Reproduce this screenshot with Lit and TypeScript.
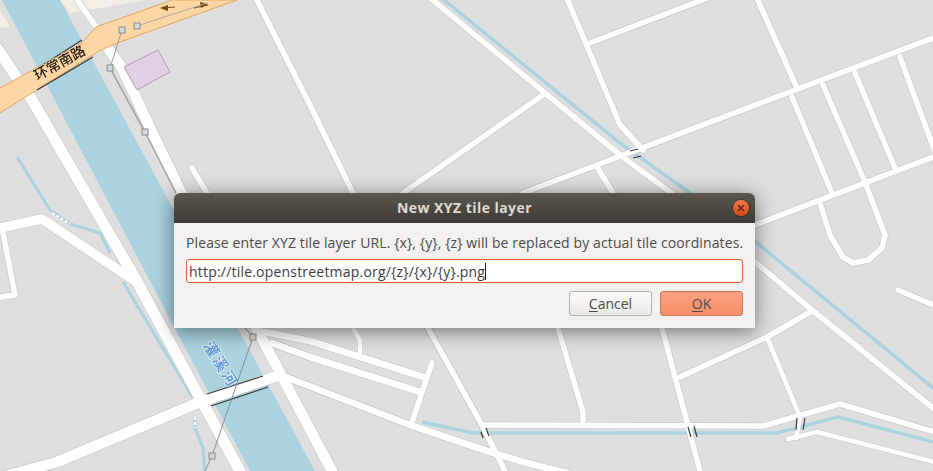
import { LitElement, html, svg, css } from 'lit';
import { customElement } from 'lit/decorators.js';

type Line = { d: string; w: number };

// white streets, in map pixels
const ROADS: Line[] = [
  { d: '-5,45 32,100 110,235 135,278 200,398 240,471', w: 10.5 },
  { d: '77,0 97,28', w: 5 },
  { d: '107,47 122,68 152,132 180,190 260,335 332,471', w: 10 },
  { d: '192,168 207,193', w: 5 },
  { d: '-5,229 42,219 135,281', w: 9 },
  { d: '3,232 15,295 -5,298', w: 5 },
  { d: '5,476 57,462 200,402 277,376', w: 10 },
  { d: '265,332 310,341 423,377', w: 6 },
  { d: '272,343 310,357 420,392', w: 6 },
  { d: '278,374 410,425 490,452 527,463 575,475', w: 6 },
  { d: '432,363 412,422', w: 5 },
  { d: '353,328 360,340 360,353', w: 4 },
  { d: '257,0 310,105 353,193 428,328 483,427 507,475', w: 5 },
  { d: '483,425 763,426 840,404 938,433', w: 5 },
  { d: '788,439 817,432 938,463', w: 4 },
  { d: '558,328 583,412 583,425', w: 5 },
  { d: '662,328 701,475', w: 5 },
  { d: '680,377 767,337 812,311', w: 5 },
  { d: '767,337 800,417 796,438', w: 4 },
  { d: '428,-4 620,155 670,192 755,262 812,310 938,412', w: 5 },
  { d: '566,-4 620,125 643,150', w: 5 },
  { d: '543,95 403,193', w: 5 },
  { d: '590,43 710,-3', w: 5 },
  { d: '523,193 938,36', w: 5 },
  { d: '597,167 613,193', w: 5 },
  { d: '756,-4 797,88', w: 5 },
  { d: '792,97 832,193', w: 5 },
  { d: '823,85 865,182 885,235', w: 5 },
  { d: '855,73 895,168', w: 5 },
  { d: '900,57 938,160', w: 5 },
  { d: '755,225 938,155', w: 5 },
  { d: '820,203 830,235 843,257 853,263 868,260 882,248 885,235', w: 5 },
  { d: '898,290 938,307', w: 5 },
];

// thin waterways
const STREAMS: Line[] = [
  { d: '439,-4 620,143 690,193 757,243 938,392', w: 3.5 },
  { d: '422,422 473,433 777,433 838,417 938,443', w: 3.5 },
  { d: '17,157 50,210 70,224 100,233 110,253', w: 3 },
  { d: '123,282 193,398', w: 3 },
  { d: '195,417 195,428 203,448 205,475', w: 3 },
];

// dark bridge edges
const BRIDGES = [
  '207,394 263,376', '211,406 268,387',
  '35,70 82,40', '37,90 93,57',
  '630,151 638,149', '633,158 641,156',
  '481,432 483,438', '486,428 489,436',
  '688,427 691,437', '694,426 697,437',
  '797,418 796,430', '805,418 803,430',
];

const HANDLES = [[122, 30], [137, 26], [110, 68], [145, 132], [253, 337], [212, 456]];

@customElement('map-canvas')
export class MapCanvas extends LitElement {
  static styles = css`
    :host {
      display: block;
      width: 933px;
      height: 471px;
    }

    svg {
      display: block;
    }

    .road-label {
      font: 500 14px "Noto Sans CJK SC", sans-serif;
      fill: #1f1a10;
      stroke: #fcd6a4;
      stroke-width: 1.5px;
      paint-order: stroke;
    }

    .water-label {
      font: 500 15px "Noto Sans CJK SC", sans-serif;
      letter-spacing: 2px;
      fill: #5f95d5;
      stroke: #d5e8f0;
      stroke-width: 2px;
      paint-order: stroke;
    }
  `;

  render() {
    return html`
      <svg width="933" height="471" viewBox="0 0 933 471">
        <defs>
          <filter id="soft" x="0" y="0" width="100%" height="100%">
            <feGaussianBlur stdDeviation="0.45"></feGaussianBlur>
          </filter>
        </defs>
        <g filter="url(#soft)">
          <rect width="933" height="471" fill="#dfdfdf"></rect>
          <polygon points="60,0 70,13 147,0" fill="#f2efe9"></polygon>
          <polygon points="0,10 10,27 0,28" fill="#f2efe9"></polygon>
          <polygon points="2,0 60,0 315,471 250,471" fill="#aad3df"></polygon>
          ${STREAMS.map((s) => svg`<polyline points=${s.d} fill="none" stroke="#aad3df" stroke-width=${s.w}></polyline>`)}
          ${ROADS.map((r) => svg`<polyline points=${r.d} fill="none" stroke="#c6c6c6" stroke-width=${r.w + 1.8} stroke-linecap="round" stroke-linejoin="round"></polyline>`)}
          ${ROADS.map((r) => svg`<polyline points=${r.d} fill="none" stroke="#fff" stroke-width=${r.w + 0.6} stroke-linecap="round" stroke-linejoin="round"></polyline>`)}
          <polyline points="52,213 70,224" fill="none" stroke="#fff" stroke-width="2" stroke-dasharray="3 2"></polyline>
          <polyline points="195,417 195,428" fill="none" stroke="#fff" stroke-width="2" stroke-dasharray="3 2"></polyline>
          <polygon points="124,67 158,50 170,72 137,90" fill="#e3cfe3" stroke="#b09cb0"></polygon>
          <polygon points="-2,89 82,43 96,27 172,0 237,0 120,42 101,50 -2,114" fill="#fcd6a4" stroke="#e3a657"></polygon>
          ${BRIDGES.map((b) => svg`<polyline points=${b} fill="none" stroke="#3a3a3a" stroke-width="1.2"></polyline>`)}
          <path d="M175 7 L162 8 M208 5 L194 8" stroke="#734a08" stroke-width="1.2" fill="none"></path>
          <path d="M160 8 L168 5 L168 11 Z M208 4 L200 2 L201 8 Z" fill="#734a08"></path>
          <text class="road-label" transform="translate(59 62) rotate(-29)" text-anchor="middle" dominant-baseline="central">环常南路</text>
          <text class="water-label" transform="translate(222 364) rotate(58)" text-anchor="middle" dominant-baseline="central">灌溪河</text>
          <g fill="none">
            <polyline points="137,26 207,3" stroke="#a9a9a9"></polyline>
            <polyline points="122,30 110,68" stroke="#999"></polyline>
            <polyline points="110,68 145,132 176,193" stroke="#a4a4a4" stroke-width="1.6"></polyline>
            <polyline points="245,328 253,337 212,456 205,471" stroke="#8d8d8d"></polyline>
          </g>
        </g>
        ${HANDLES.map(([x, y]) => svg`
          <rect x=${x - 3} y=${y - 3} width="6" height="6" fill="#d3d9e0" stroke="#8a8a8a"></rect>
        `)}
      </svg>
    `;
  }
}

@customElement('tile-dialog')
export class TileDialog extends LitElement {
  static styles = css`
    :host {
      display: flex;
      flex-direction: column;
      width: 581px;
      height: 135px;
      background: #f2f1ef;
      border-radius: 6px 6px 0 0;
      box-shadow: 0 3px 20px rgba(0, 0, 0, 0.5);
      font-family: "Open Sans", "Noto Sans", sans-serif;
      font-size: 14px;
      color: #4c4c4c;
    }

    .titlebar {
      position: relative;
      flex: none;
      height: 29px;
      padding-bottom: 1px;
      display: flex;
      align-items: center;
      justify-content: center;
      background: linear-gradient(#5a574e, #3d3b35);
      border-radius: 6px 6px 0 0;
      color: #dfdbd2;
      font-weight: 700;
      letter-spacing: 0.45px;
    }

    .close {
      position: absolute;
      right: 6px;
      top: 7px;
      width: 16px;
      height: 16px;
      border-radius: 50%;
      background: linear-gradient(#f27a45, #d9481a);
      box-shadow: 0 0 0 1px rgba(40, 30, 20, 0.5);
    }

    .close svg {
      display: block;
    }

    .body {
      flex: 1;
      display: flex;
      flex-direction: column;
      padding: 10px 12px 12px;
    }

    .prompt {
      height: 26px;
      line-height: 20px;
      white-space: nowrap;
      letter-spacing: 0.11px;
    }

    .field {
      height: 24px;
      box-sizing: border-box;
      display: flex;
      align-items: center;
      padding: 0 2px;
      border: 1px solid #e0602c;
      border-radius: 3px;
      background: #fff;
      box-shadow: inset 0 0 0 1px rgba(240, 120, 70, 0.12);
      color: #3c3c3c;
      white-space: nowrap;
      letter-spacing: 0.2px;
    }

    .caret {
      width: 1px;
      height: 17px;
      background: #222;
    }

    .actions {
      display: flex;
      justify-content: flex-end;
      gap: 8px;
      margin-top: 8px;
    }

    .btn {
      width: 83px;
      height: 25px;
      box-sizing: border-box;
      display: flex;
      align-items: center;
      justify-content: center;
      border: 1px solid #b6b2ab;
      border-radius: 3px;
      background: linear-gradient(#fcfcfb, #e9e8e6);
    }

    .btn.ok {
      border-color: #c4795a;
      background: linear-gradient(#fca283, #f68d66);
    }

    u {
      text-underline-offset: 2px;
    }
  `;

  render() {
    return html`
      <div class="titlebar">
        New XYZ tile layer
        <div class="close">
          <svg width="16" height="16" viewBox="0 0 16 16">
            <path d="M5.2 5.2 L10.8 10.8 M10.8 5.2 L5.2 10.8" stroke="#3a2a20" stroke-width="1.3"></path>
          </svg>
        </div>
      </div>
      <div class="body">
        <div class="prompt">Please enter XYZ tile layer URL. {x}, {y}, {z} will be replaced by actual tile coordinates.</div>
        <div class="field">http://tile.openstreetmap.org/{z}/{x}/{y}.png<span class="caret"></span></div>
        <div class="actions">
          <div class="btn"><span><u>C</u>ancel</span></div>
          <div class="btn ok"><span><u>O</u>K</span></div>
        </div>
      </div>
    `;
  }
}

@customElement('app-root')
export class AppRoot extends LitElement {
  static styles = css`
    :host {
      display: block;
      position: relative;
      width: 933px;
      height: 471px;
      overflow: hidden;
    }

    tile-dialog {
      position: absolute;
      left: 174px;
      top: 193px;
    }
  `;

  render() {
    return html`
      <map-canvas></map-canvas>
      <tile-dialog></tile-dialog>
    `;
  }
}
